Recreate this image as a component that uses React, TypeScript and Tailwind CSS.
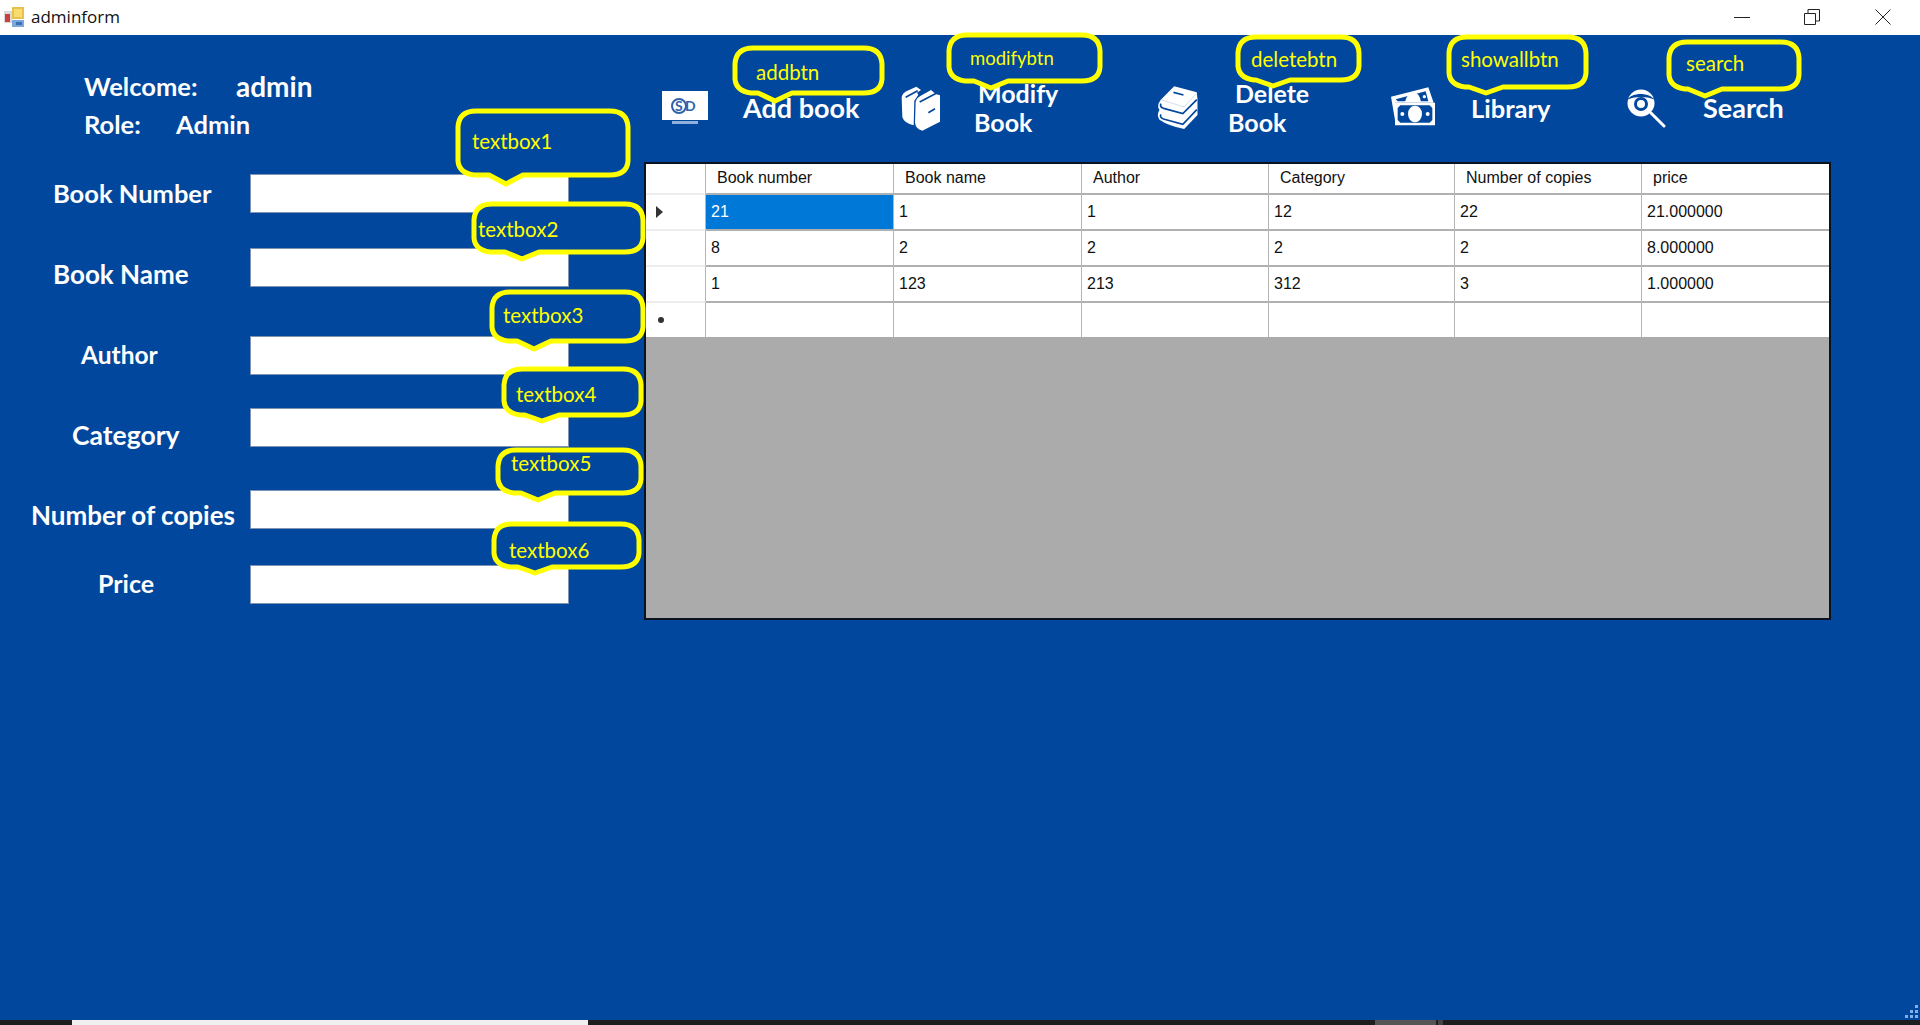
import React from "react";

const headingFont = "font-['Lato',sans-serif] font-bold text-white";

/* ===== DATA ===== */
const fields = [
  { name: "Book Number", row: "mt-[35px]", label: "pl-[53px] text-[25.500px] translate-y-0" },
  { name: "Book Name", row: "mt-[35px]", label: "pl-[53px] text-[26px] translate-y-[7px]" },
  { name: "Author", row: "mt-[49px]", label: "pl-[81px] text-[24.500px] translate-y-0" },
  { name: "Category", row: "mt-[33px]", label: "pl-[72px] text-[26.500px] translate-y-[8px]" },
  { name: "Number of copies", row: "mt-[43px]", label: "pl-[31px] text-[26px] translate-y-[6px]" },
  { name: "Price", row: "mt-[36px]", label: "pl-[98px] text-[25px] -translate-y-[1px]" },
];

const columns = [
  { title: "Book number", width: "w-[188px]" },
  { title: "Book name", width: "w-[188px]" },
  { title: "Author", width: "w-[187px]" },
  { title: "Category", width: "w-[186px]" },
  { title: "Number of copies", width: "w-[187px]" },
  { title: "price", width: "w-[187px]" },
];

const rows = [
  ["21", "1", "1", "12", "22", "21.000000"],
  ["8", "2", "2", "2", "2", "8.000000"],
  ["1", "123", "213", "312", "3", "1.000000"],
  ["", "", "", "", "", ""],
];

const callouts = [
  { text: "textbox1", box: "left-[456px] top-[74px]", pad: "text-[20.500px] pl-[16px] pt-[20px]", w: 174, h: 68, tipX: 50, tipH: 9 },
  { text: "textbox2", box: "left-[472px] top-[167px]", pad: "text-[20.500px] pl-[6px] pt-[15px]", w: 173, h: 52, tipX: 50, tipH: 7 },
  { text: "textbox3", box: "left-[490px] top-[255px]", pad: "text-[20.500px] pl-[13px] pt-[13px]", w: 155, h: 53, tipX: 44, tipH: 8 },
  { text: "textbox4", box: "left-[502px] top-[332px]", pad: "text-[20.500px] pl-[14px] pt-[15px]", w: 141, h: 50, tipX: 40, tipH: 6 },
  { text: "textbox5", box: "left-[496px] top-[413px]", pad: "text-[20.500px] pl-[15px] pt-[3px]", w: 147, h: 47, tipX: 42, tipH: 7 },
  { text: "textbox6", box: "left-[492px] top-[487px]", pad: "text-[20.500px] pl-[17px] pt-[16px]", w: 149, h: 47, tipX: 43, tipH: 6 },
  { text: "addbtn", box: "left-[733px] top-[11px]", pad: "text-[20.500px] pl-[23px] pt-[14px]", w: 151, h: 49, tipX: 42, tipH: 8 },
  { text: "modifybtn", box: "left-[947px] top-[-2px]", pad: "text-[18.500px] pl-[23px] pt-[13px]", w: 155, h: 50, tipX: 44, tipH: 7 },
  { text: "deletebtn", box: "left-[1236px] top-[0px]", pad: "text-[20.500px] pl-[15px] pt-[12px]", w: 125, h: 47, tipX: 37, tipH: 6 },
  { text: "showallbtn", box: "left-[1447px] top-[0px]", pad: "text-[20.500px] pl-[14px] pt-[12px]", w: 141, h: 54, tipX: 39, tipH: 6 },
  { text: "search", box: "left-[1667px] top-[5px]", pad: "text-[20.500px] pl-[19px] pt-[11px]", w: 134, h: 51, tipX: 38, tipH: 7 },
];

/* ===== ICONS ===== */
const SdIcon = () => (
  <svg width="46" height="34" viewBox="0 0 46 34">
    <path d="M0 0h46v29H0z" fill="#fff" />
    <path d="M10 30h26v3H10z" fill="#8fb1dc" />
    <circle cx="17" cy="15" r="7" fill="none" stroke="#2f62a8" strokeWidth="2" />
    <text x="13" y="20" fontSize="14" fontWeight="700" fontFamily="Lato, sans-serif" fill="#2f62a8">
      S
    </text>
    <text x="23" y="20" fontSize="14" fontWeight="700" fontFamily="Lato, sans-serif" fill="#2f62a8">
      D
    </text>
  </svg>
);

const BooksIcon = () => (
  <svg width="40" height="45" viewBox="18 18 120 135">
    <path d="M20 52Q22 40 34 34L64 20 78 30 66 38 70 44 58 62 56 136Q28 130 22 112Z" fill="#fff" />
    <path d="M32 52 68 32" stroke="#00479d" strokeWidth="5" />
    <path d="M62 66Q64 54 76 48L108 30 122 42 135 46V125L82 152Q62 146 60 128Z" fill="#fff" />
    <path d="M74 66 124 40" stroke="#00479d" strokeWidth="5" />
    <path d="M100 98 120 86" stroke="#00479d" strokeWidth="5" />
  </svg>
);

const StackIcon = () => (
  <svg width="43" height="44" viewBox="26 21 124 132" fill="none">
    <path d="M78 22 146 40 148 62V108L108 150Q60 140 34 122 24 108 34 92 24 80 38 62Z" fill="#fff" />
    <path d="M38 62 108 84 146 42" stroke="#b9cde8" strokeWidth="2" />
    <path d="M76 40 106 48" stroke="#00479d" strokeWidth="5" />
    <path d="M38 74Q34 84 46 88L104 104 146 62" stroke="#00479d" strokeWidth="5" />
    <path d="M38 106Q34 116 46 120L104 136 146 92" stroke="#00479d" strokeWidth="5" />
  </svg>
);

const MoneyIcon = () => (
  <svg width="45" height="42" viewBox="18 21 135 126" fill="#fff">
    <path d="M18 50 130 22 146 68H30V120Z" />
    <path d="M32 58 122 34 130 64H38Z" fill="#00479d" />
    <path d="M60 66Q66 38 86 38 104 38 108 66Z" />
    <circle cx="118" cy="50" r="5" />
    <path d="M30 68H150V136H30Z" />
    <path d="M46 76H134L142 84V120L134 128H46L38 120V84Z" fill="#00479d" />
    <ellipse cx="90" cy="102" rx="21" ry="25" />
    <circle cx="52" cy="102" r="6" />
    <circle cx="128" cy="102" r="6" />
  </svg>
);

const EyeSearchIcon = () => (
  <svg width="39" height="39" viewBox="0 0 39 39" fill="none">
    <circle cx="14" cy="14" r="13.500" fill="#fff" />
    <path d="M0 11C5 3 22 3 28 11 22 7 6 7 0 11z" fill="#00479d" />
    <circle cx="14" cy="15" r="7" fill="#00479d" />
    <circle cx="14" cy="15" r="4" fill="#fff" />
    <path d="M24 24l13 13" stroke="#fff" strokeWidth="3" strokeLinecap="round" />
  </svg>
);

const AppIcon = () => (
  <svg width="20" height="20" viewBox="0 0 20 20">
    <path d="M0 4h8v12H0z" fill="#d9d9d9" />
    <path d="M1 7h5v8H1z" fill="#c9413a" />
    <path d="M8 0h12v12H8z" fill="#e7c04e" />
    <path d="M10 2h8v8h-8z" fill="#f7dc6f" />
    <path d="M8 13h12v7H8z" fill="#7fa6d8" />
    <path d="M12 15h6v3h-6z" fill="#3d6fb5" />
  </svg>
);

/* ===== CALLOUT ===== */
const Callout = ({ text, box, pad, w, h, tipX, tipH }: (typeof callouts)[number]) => (
  <div className={`absolute ${box}`}>
    <svg
      width={w + 4}
      height={h + tipH + 4}
      viewBox={`-2 -2 ${w + 4} ${h + tipH + 4}`}
      className="absolute -left-[2px] -top-[2px]"
    >
      <path
        d={`M20 2 H${w - 20} Q${w - 3} 2 ${w - 2} 18 V${h - 16} Q${w - 3} ${h - 2} ${w - 20} ${h - 2} H${tipX + 17} L${tipX} ${h + tipH - 2} L${tipX - 17} ${h - 2} H18 Q3 ${h - 4} 2 ${h - 16} V18 Q3 2 20 2 Z`}
        fill="#00479d"
        stroke="#ffff00"
        strokeWidth="5"
        strokeLinejoin="round"
      />
    </svg>
    <div className={`relative font-['Lato',sans-serif] leading-[24px] text-[#ffff00] ${pad}`}>{text}</div>
  </div>
);

const App = () => {
  return (
    <div className="flex flex-col w-[1920px] h-[1025px] overflow-hidden bg-[#00479d]">
      {/* ===== TITLE BAR ===== */}
      <div className="flex h-[35px] shrink-0 items-center bg-white pl-[4px] pb-[1px]">
        <AppIcon />
        <span className="ml-[7px] font-['Open_Sans',sans-serif] text-[17px] text-[#111]">adminform</span>
        <div className="ml-auto flex items-center pr-[29px] text-[#222]">
          <svg width="16" height="16" viewBox="0 0 16 16" className="mr-[54px]">
            <path d="M0 8.500h16" stroke="#222" strokeWidth="1" />
          </svg>
          <svg width="16" height="16" viewBox="0 0 16 16" className="mr-[55px]" fill="none" stroke="#222">
            <path d="M.5 4.500h11v11H.5z" />
            <path d="M4 4V.5h11.500V12H12" />
          </svg>
          <svg width="16" height="16" viewBox="0 0 16 16" stroke="#222" strokeWidth="1">
            <path d="M.5.5l15 15M15.500.5l-15 15" />
          </svg>
        </div>
      </div>

      {/* ===== MAIN ===== */}
      <div className="relative flex flex-1">
        {/* ===== LEFT FORM ===== */}
        <div className="w-[644px] shrink-0">
          <div className={`pl-[84px] pt-[36px] text-[25.500px] leading-[30px] ${headingFont}`}>
            <div className="flex">
              <span className="w-[152px]">Welcome:</span>
              <span className="text-[28px]">admin</span>
            </div>
            <div className="mt-[8px] flex">
              <span className="w-[92px]">Role:</span>
              <span>Admin</span>
            </div>
          </div>
          {fields.map((field) => (
            <div key={field.name} className={`flex h-[39px] items-center ${field.row}`}>
              <span className={`w-[250px] shrink-0 whitespace-nowrap ${field.label} ${headingFont}`}>{field.name}</span>
              <input className="h-[39px] w-[319px] border border-[#7f93b5] bg-white outline-none" />
            </div>
          ))}
        </div>

        {/* ===== RIGHT SIDE ===== */}
        <div className="flex flex-col">
          {/* ===== TOOLBAR ===== */}
          <div className={`flex h-[127px] pl-[18px] pt-[50px] text-[25px] leading-[28px] ${headingFont}`}>
            <div className="flex h-[46px] w-[239px] items-center">
              <SdIcon />
              <span className="ml-[35px] text-[27px]">Add book</span>
            </div>
            <div className="flex h-[46px] w-[255px] items-center">
              <BooksIcon />
              <span className="ml-[33px]">
                <span className="block pl-[4px] -translate-y-[1px]">Modify</span>
                <span className="block">Book</span>
              </span>
            </div>
            <div className="flex h-[46px] w-[235px] items-center">
              <StackIcon />
              <span className="ml-[29px]">
                <span className="block pl-[7px] -translate-y-[1px]">Delete</span>
                <span className="block">Book</span>
              </span>
            </div>
            <div className="flex h-[46px] w-[236px] items-center">
              <MoneyIcon />
              <span className="ml-[35px] text-[25.500px]">Library</span>
            </div>
            <div className="flex h-[46px] items-center">
              <EyeSearchIcon />
              <span className="ml-[37px] text-[27px]">Search</span>
            </div>
          </div>

          {/* ===== GRID ===== */}
          <div className="h-[458px] w-[1187px] border-2 border-[#0b1220] bg-[#ababab] font-['Liberation_Sans',sans-serif] text-[16px] text-[#111]">
            <div className="flex h-[29px] bg-white">
              <div className="w-[60px] shrink-0 border-r border-[#b5b5b5]" />
              {columns.map((col) => (
                <div
                  key={col.title}
                  className={`${col.width} shrink-0 border-r border-[#b5b5b5] pl-[11px] leading-[28px] last:border-r-0`}
                >
                  {col.title}
                </div>
              ))}
            </div>
            {rows.map((row, rowIndex) => (
              <div key={rowIndex} className="flex h-[36px] bg-white">
                <div className="flex w-[60px] shrink-0 items-center border-t-2 border-r border-t-[#ececec] border-r-[#b5b5b5] pl-[10px]">
                  {rowIndex === 0 && (
                    <svg width="8" height="12" viewBox="0 0 8 12">
                      <path d="M0 0l7 6-7 6z" fill="#333" />
                    </svg>
                  )}
                  {rowIndex === 3 && <span className="ml-[2px] h-[6px] w-[6px] rounded-full bg-[#333]" />}
                </div>
                {row.map((cell, cellIndex) => (
                  <div
                    key={cellIndex}
                    className={`${columns[cellIndex].width} shrink-0 border-t-2 border-r border-t-[#b0b0b0] border-r-[#b5b5b5] pl-[5px] leading-[33px] last:border-r-0 ${
                      rowIndex === 0 && cellIndex === 0 ? "bg-[#0078d7] text-white" : ""
                    }`}
                  >
                    {cell}
                  </div>
                ))}
              </div>
            ))}
          </div>
        </div>

        {/* ===== ANNOTATIONS ===== */}
        {callouts.map((callout) => (
          <Callout key={callout.text} {...callout} />
        ))}

        {/* ===== RESIZE GRIP ===== */}
        <svg width="14" height="14" viewBox="0 0 14 14" fill="#7fb0ea" className="absolute bottom-[1px] right-[1px]">
          <path d="M10 0h3v3h-3zM5 5h3v3H5zM10 5h3v3h-3zM0 10h3v3H0zM5 10h3v3H5zM10 10h3v3h-3z" />
        </svg>
      </div>

      {/* ===== BOTTOM STRIP ===== */}
      <div className="flex h-[5px] shrink-0 bg-[#1e1e1e]">
        <div className="ml-[72px] w-[516px] bg-[#f0f0f0]" />
        <div className="ml-[787px] w-[61px] bg-[#555]" />
        <div className="ml-[2px] w-[5px] bg-[#444]" />
      </div>
    </div>
  );
};

export default App;
